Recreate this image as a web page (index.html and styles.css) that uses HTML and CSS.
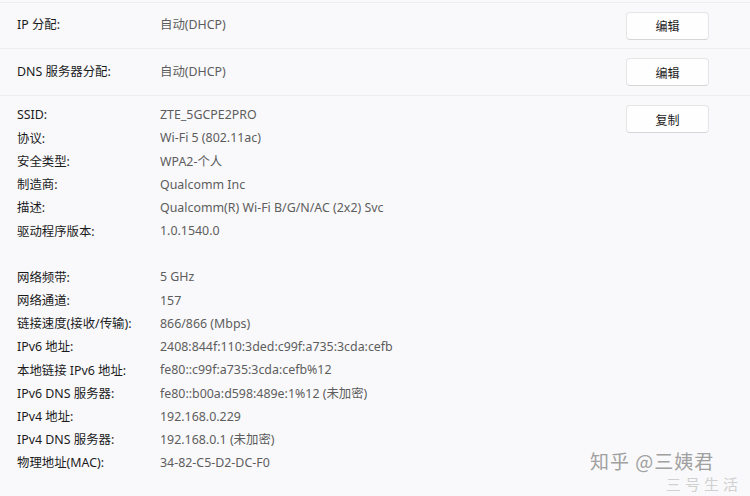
FILE: index.html
```html
<!DOCTYPE html>
<html lang="zh-CN">
<head>
  <meta charset="UTF-8">
  <title>网络属性</title>
  <link rel="stylesheet" href="styles.css">
</head>
<body>

  <div class="top"></div>

  <div class="row">
    <div class="label">IP 分配:</div>
    <div class="value">自动(DHCP)</div>
    <button class="button">编辑</button>
  </div>

  <div class="row">
    <div class="label">DNS 服务器分配:</div>
    <div class="value">自动(DHCP)</div>
    <button class="button">编辑</button>
  </div>

  <div class="props">
    <dl class="list">
      <dt>SSID:</dt><dd>ZTE_5GCPE2PRO</dd>
      <dt>协议:</dt><dd>Wi-Fi 5 (802.11ac)</dd>
      <dt>安全类型:</dt><dd>WPA2-个人</dd>
      <dt>制造商:</dt><dd>Qualcomm Inc</dd>
      <dt>描述:</dt><dd>Qualcomm(R) Wi-Fi B/G/N/AC (2x2) Svc</dd>
      <dt>驱动程序版本:</dt><dd>1.0.1540.0</dd>
      <dt class="blank">&nbsp;</dt><dd class="blank">&nbsp;</dd>
      <dt>网络频带:</dt><dd>5 GHz</dd>
      <dt>网络通道:</dt><dd>157</dd>
      <dt>链接速度(接收/传输):</dt><dd>866/866 (Mbps)</dd>
      <dt>IPv6 地址:</dt><dd>2408:844f:110:3ded:c99f:a735:3cda:cefb</dd>
      <dt>本地链接 IPv6 地址:</dt><dd>fe80::c99f:a735:3cda:cefb%12</dd>
      <dt>IPv6 DNS 服务器:</dt><dd>fe80::b00a:d598:489e:1%12 (未加密)</dd>
      <dt>IPv4 地址:</dt><dd>192.168.0.229</dd>
      <dt>IPv4 DNS 服务器:</dt><dd>192.168.0.1 (未加密)</dd>
      <dt>物理地址(MAC):</dt><dd>34-82-C5-D2-DC-F0</dd>
    </dl>
    <button class="button">复制</button>
  </div>

  <div class="watermark">
    <div class="wm-main">知乎 @三姨君</div>
    <div class="wm-sub">三号生活</div>
  </div>

</body>
</html>
```

FILE: styles.css
```css
body {
  margin: 0;
  font-family: 'Noto Sans', 'Noto Sans CJK SC', sans-serif;
  font-size: 12.4px;
  background-color: #f9f9fb;
  color: #1b1b1b;
  height: 496px;
  overflow: hidden;
  position: relative;
}

.top {
  height: 2px;
  border-bottom: 1px solid #ededf0;
}

.row {
  display: flex;
  align-items: center;
  height: 45px;
  padding: 0 41px 0 17px;
  border-bottom: 1px solid #ededf0;
}

.row .label,
.row .value {
  margin-top: -3px;
}

.row + .row {
  height: 46px;
}

.label {
  width: 143px;
}

.value {
  flex: 1;
  color: #5d5d5d;
}

.button {
  width: 83px;
  height: 28px;
  background-color: #fefefe;
  border: 1px solid #e5e5e5;
  border-bottom-color: #d6d6d6;
  border-radius: 4px;
  font-family: 'Noto Sans CJK SC', sans-serif;
  font-size: 12px;
  color: #1b1b1b;
  padding: 0;
}

.props {
  display: flex;
  align-items: flex-start;
  padding: 9px 41px 0 17px;
}

.list {
  flex: 1;
  margin: 0;
  display: grid;
  grid-template-columns: 143px 1fr;
  grid-auto-rows: 23.2px;
  align-items: center;
  margin-top: -2px;
}

.list dt {
  margin: 0;
}

.list dd {
  margin: 0;
  color: #5d5d5d;
}

.watermark {
  position: absolute;
  left: 590px;
  top: 448px;
  font-family: 'Noto Sans CJK SC', sans-serif;
}

.wm-main {
  font-size: 19px;
  color: #a0a0a0;
  letter-spacing: 1px;
  line-height: 26px;
}

.wm-sub {
  position: absolute;
  left: 76px;
  top: 27px;
  font-size: 15px;
  line-height: 18px;
  color: #d0d0d0;
  letter-spacing: 4px;
  white-space: nowrap;
}
```
